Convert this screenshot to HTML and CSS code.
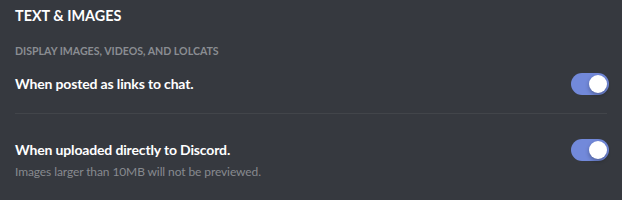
FILE: index.html
```html
<!DOCTYPE html>
<html>
<head>
<meta charset="utf-8">
<link rel="stylesheet" href="styles.css">
</head>
<body>
<div class="panel">
  <h2 class="title">TEXT &amp; IMAGES</h2>
  <div class="subhead">DISPLAY IMAGES, VIDEOS, AND LOLCATS</div>
  <div class="setting first">
    <div class="row">
      <div class="label">When posted as links to chat.</div>
      <div class="toggle"><div class="knob"></div></div>
    </div>
  </div>
  <div class="divider"></div>
  <div class="setting second">
    <div class="row">
      <div class="label">When uploaded directly to Discord.</div>
      <div class="toggle"><div class="knob"></div></div>
    </div>
    <div class="note">Images larger than 10MB will not be previewed.</div>
  </div>
</div>
</body>
</html>
```
FILE: styles.css
```css
html, body {
  margin: 0;
  padding: 0;
  background: #36393f;
}
body {
  width: 622px;
  height: 200px;
  overflow: hidden;
  font-family: "Lato", "Open Sans", Arial, sans-serif;
}
.panel {
  padding: 6px 13px 0 15px;
}
.title {
  margin: 0;
  font-size: 14.4px;
  line-height: 20px;
  font-weight: 700;
  color: #ffffff;
}
.subhead {
  margin-top: 17px;
  font-size: 10.6px;
  line-height: 16px;
  font-weight: 700;
  color: #8a8d92;
}
.setting {
  display: flex;
  flex-direction: column;
}
.row {
  display: flex;
  align-items: center;
  justify-content: space-between;
}
.first {
  margin-top: 14px;
}
.label {
  font-size: 14px;
  line-height: 20px;
  font-weight: 700;
  letter-spacing: -0.15px;
  color: #ffffff;
}
.toggle {
  width: 38px;
  height: 22px;
  border-radius: 11px;
  background: #7289da;
  position: relative;
}
.knob {
  position: absolute;
  top: 2px;
  right: 2px;
  width: 18px;
  height: 18px;
  border-radius: 50%;
  background: #ffffff;
  box-shadow: 0 2px 4px rgba(0,0,0,0.3);
}
.divider {
  height: 1px;
  background: #42454a;
  margin: 18px 2px 0 0;
}
.second {
  margin-top: 25px;
}
.note {
  margin-top: 2px;
  font-size: 12px;
  line-height: 18px;
  letter-spacing: -0.1px;
  color: #878a8f;
}
```
